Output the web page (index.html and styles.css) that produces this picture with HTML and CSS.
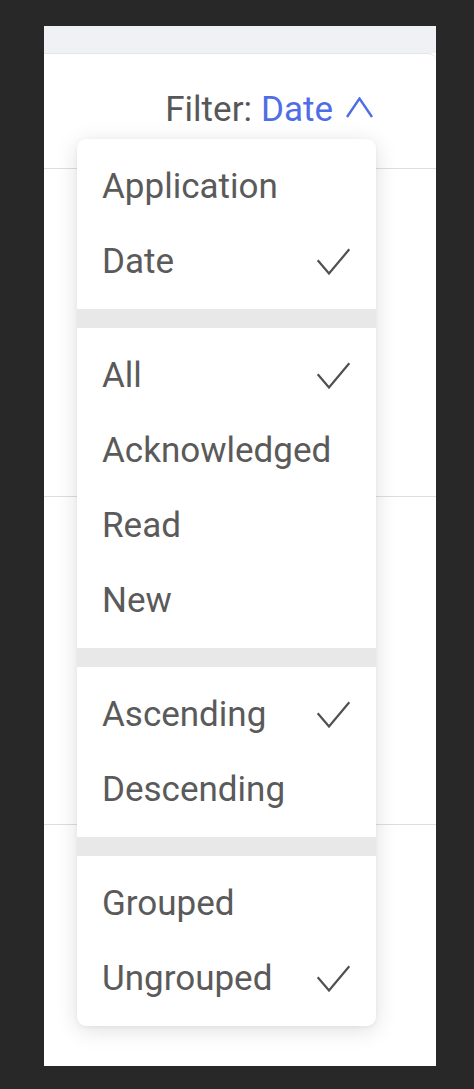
FILE: index.html
```html
<!DOCTYPE html>
<html lang="en">
<head>
<meta charset="utf-8">
<title>Filter menu</title>
<link rel="stylesheet" href="styles.css">
</head>
<body>
<div class="panel">
  <div class="topband"></div>
  <div class="card">
    <div class="header">
      <div class="filter">
        <span class="label">Filter:</span>
        <span class="value">Date</span>
        <svg class="chevron" width="27" height="21" viewBox="0 0 27 21"><polyline points="1,20 13.5,1.5 26,20" fill="none" stroke="#4f6ee6" stroke-width="2.4" stroke-linejoin="miter"/></svg>
      </div>
    </div>
    <div class="row"></div>
    <div class="row"></div>
    <div class="row last"></div>

    <div class="menu">
      <div class="section">
        <div class="item"><span>Application</span></div>
        <div class="item"><span>Date</span><svg class="check" width="35" height="27" viewBox="0 0 35 27"><polyline points="1.7,12.3 13,25.5 33.3,1.3" fill="none" stroke="#505050" stroke-width="2.2"/></svg></div>
      </div>
      <div class="sep"></div>
      <div class="section">
        <div class="item"><span>All</span><svg class="check" width="35" height="27" viewBox="0 0 35 27"><polyline points="1.7,12.3 13,25.5 33.3,1.3" fill="none" stroke="#505050" stroke-width="2.2"/></svg></div>
        <div class="item"><span>Acknowledged</span></div>
        <div class="item"><span>Read</span></div>
        <div class="item"><span>New</span></div>
      </div>
      <div class="sep"></div>
      <div class="section">
        <div class="item"><span>Ascending</span><svg class="check" width="35" height="27" viewBox="0 0 35 27"><polyline points="1.7,12.3 13,25.5 33.3,1.3" fill="none" stroke="#505050" stroke-width="2.2"/></svg></div>
        <div class="item"><span>Descending</span></div>
      </div>
      <div class="sep"></div>
      <div class="section">
        <div class="item"><span>Grouped</span></div>
        <div class="item"><span>Ungrouped</span><svg class="check" width="35" height="27" viewBox="0 0 35 27"><polyline points="1.7,12.3 13,25.5 33.3,1.3" fill="none" stroke="#505050" stroke-width="2.2"/></svg></div>
      </div>
    </div>
  </div>
</div>
</body>
</html>
```

FILE: styles.css
```css
html, body {
  margin: 0;
  padding: 0;
  background: #282828;
}
body {
  font-family: Roboto, "Liberation Sans", sans-serif;
  padding: 26px 38px 23px 44px;
}
.panel {
  width: 392px;
  height: 1040px;
  background: #ffffff;
  display: flex;
  flex-direction: column;
  overflow: hidden;
}
.topband {
  height: 27px;
  background: #f0f1f4;
  flex: none;
}
.card {
  position: relative;
  flex: 1;
  background: #fff;
  border-top: 1px solid #e4e5e8;
  border-top-right-radius: 8px;
  display: flex;
  flex-direction: column;
}
.header {
  height: 115px;
  border-bottom: 1.5px solid #dedede;
  display: flex;
  justify-content: flex-end;
  box-sizing: border-box;
  padding: 36px 63px 0 0;
  flex: none;
}
.filter {
  display: flex;
  align-items: flex-start;
  font-size: 35px;
  line-height: 40px;
  height: 40px;
}
.label {
  color: #575757;
}
.value {
  color: #4f6ee6;
  margin-left: 9px;
}
.chevron {
  margin-left: 13px;
  margin-top: 7px;
}
.row {
  height: 328px;
  box-sizing: border-box;
  border-bottom: 1.5px solid #dedede;
  flex: none;
}
.row.last {
  border-bottom: none;
  flex: 1;
}
.menu {
  position: absolute;
  left: 33px;
  top: 85px;
  width: 299px;
  background: #fff;
  border-radius: 9px;
  box-shadow: 0 4px 22px rgba(0, 0, 0, 0.13), 0 1px 4px rgba(0, 0, 0, 0.05);
  overflow: hidden;
  display: flex;
  flex-direction: column;
}
.section {
  padding: 10px 0;
}
.sep {
  height: 19px;
  background: #e8e8e8;
}
.item {
  height: 75px;
  display: flex;
  align-items: center;
  justify-content: space-between;
  padding: 0 25px 0 25px;
  font-size: 35px;
  line-height: 75px;
  color: #5a5a5a;
}
.check {
  flex: none;
}
```
